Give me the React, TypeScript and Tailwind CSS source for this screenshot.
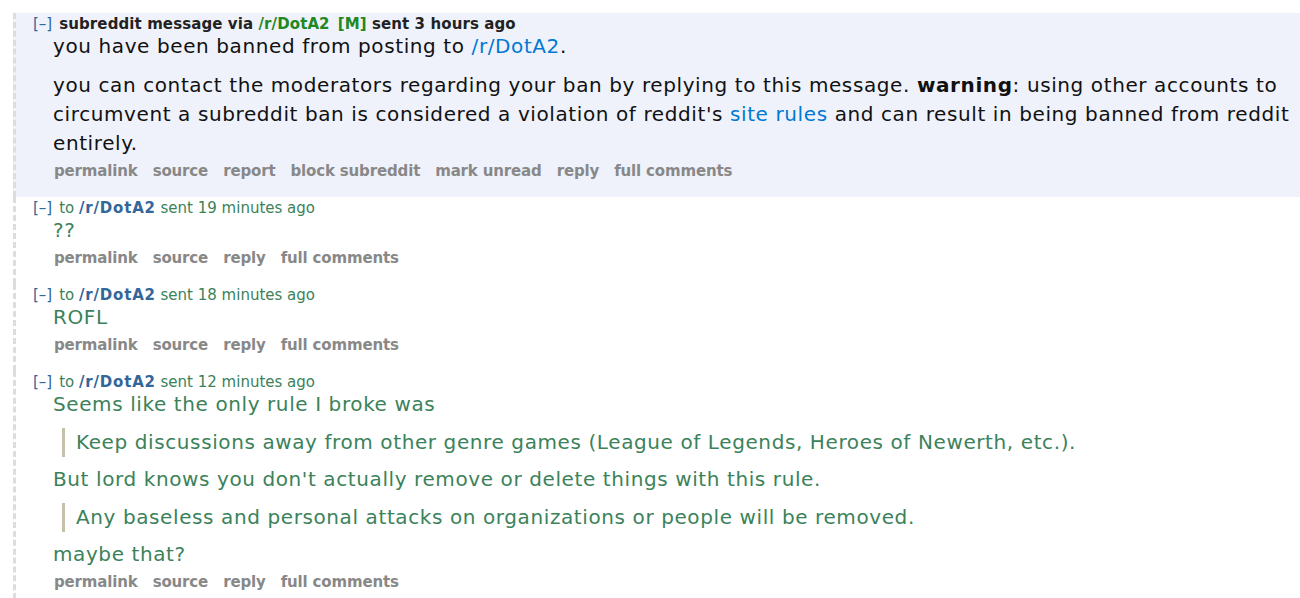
import React from 'react';

const FONT = { fontFamily: '"DejaVu Sans", Verdana, sans-serif' };

type Msg = {
  highlight?: boolean;
  header: React.ReactNode;
  body: React.ReactNode;
  buttons: string[];
};

const Toggle = () => <span className="text-[#336699] font-normal mr-[7px] tracking-normal">[–]</span>;

const SentHeader = ({ ago }: { ago: string }) => (
  <div className="text-[15px] leading-[16px] text-[#3b825a]">
    <Toggle />
    to <span className="font-bold text-[#336699] tracking-[0.8px]">/r/DotA2</span> sent {ago}
  </div>
);

const Quote = ({ children }: { children: React.ReactNode }) => (
  <div className="ml-[9px] border-l-[3px] border-[#c5c1ad] pl-[11px]">{children}</div>
);

const messages: Msg[] = [
  {
    highlight: true,
    header: (
      <div className="text-[15px] leading-[16px] font-bold text-[#222] tracking-[0.1px]">
        <Toggle />
        subreddit message via <span className="text-[#228822]">/r/DotA2</span>
        <span className="text-[#228822] ml-[8px]">[M]</span> sent 3 hours ago
      </div>
    ),
    body: (
      <div className="text-[#111]">
        <p>
          you have been banned from posting to <span className="text-[#0079d3]">/r/DotA2</span>.
        </p>
        <p className="mt-[10px]">
          you can contact the moderators regarding your ban by replying to this message.{' '}
          <b>warning</b>: using other accounts to circumvent a subreddit ban is considered a violation of
          reddit's <span className="text-[#0079d3]">site rules</span> and can result in being banned from
          reddit entirely.
        </p>
      </div>
    ),
    buttons: ['permalink', 'source', 'report', 'block subreddit', 'mark unread', 'reply', 'full comments'],
  },
  {
    header: <SentHeader ago="19 minutes ago" />,
    body: <p className="text-[#3b825a]">??</p>,
    buttons: ['permalink', 'source', 'reply', 'full comments'],
  },
  {
    header: <SentHeader ago="18 minutes ago" />,
    body: <p className="text-[#3b825a]">ROFL</p>,
    buttons: ['permalink', 'source', 'reply', 'full comments'],
  },
  {
    header: <SentHeader ago="12 minutes ago" />,
    body: (
      <div className="text-[#3b825a] flex flex-col gap-[8.5px]">
        <p>Seems like the only rule I broke was</p>
        <Quote>Keep discussions away from other genre games (League of Legends, Heroes of Newerth, etc.).</Quote>
        <p>But lord knows you don't actually remove or delete things with this rule.</p>
        <Quote>Any baseless and personal attacks on organizations or people will be removed.</Quote>
        <p>maybe that?</p>
      </div>
    ),
    buttons: ['permalink', 'source', 'reply', 'full comments'],
  },
];

const Message: React.FC<{ msg: Msg }> = ({ msg }) => (
  <div
    className={`border-l-[3px] border-dashed border-[#dddddd] pl-[17px] pr-[4px] pt-[3px] pb-4 ${
      msg.highlight ? 'bg-[#eff2fb]' : ''
    }`}
  >
    {msg.header}
    <div className="ml-[20px]">
      <div className="text-[20px] leading-[29px] tracking-[0.6px]">{msg.body}</div>
      <ul className="flex gap-[15px] mt-[3px] text-[15px] leading-[20px] font-bold text-[#888] ml-[1px] tracking-[-0.15px]">
        {msg.buttons.map((b) => (
          <li key={b}>{b}</li>
        ))}
      </ul>
    </div>
  </div>
);

export default function App() {
  return (
    <div className="min-h-screen bg-white pt-[13px] pl-[13px]" style={FONT}>
      {messages.map((m, i) => (
        <Message key={i} msg={m} />
      ))}
    </div>
  );
}
